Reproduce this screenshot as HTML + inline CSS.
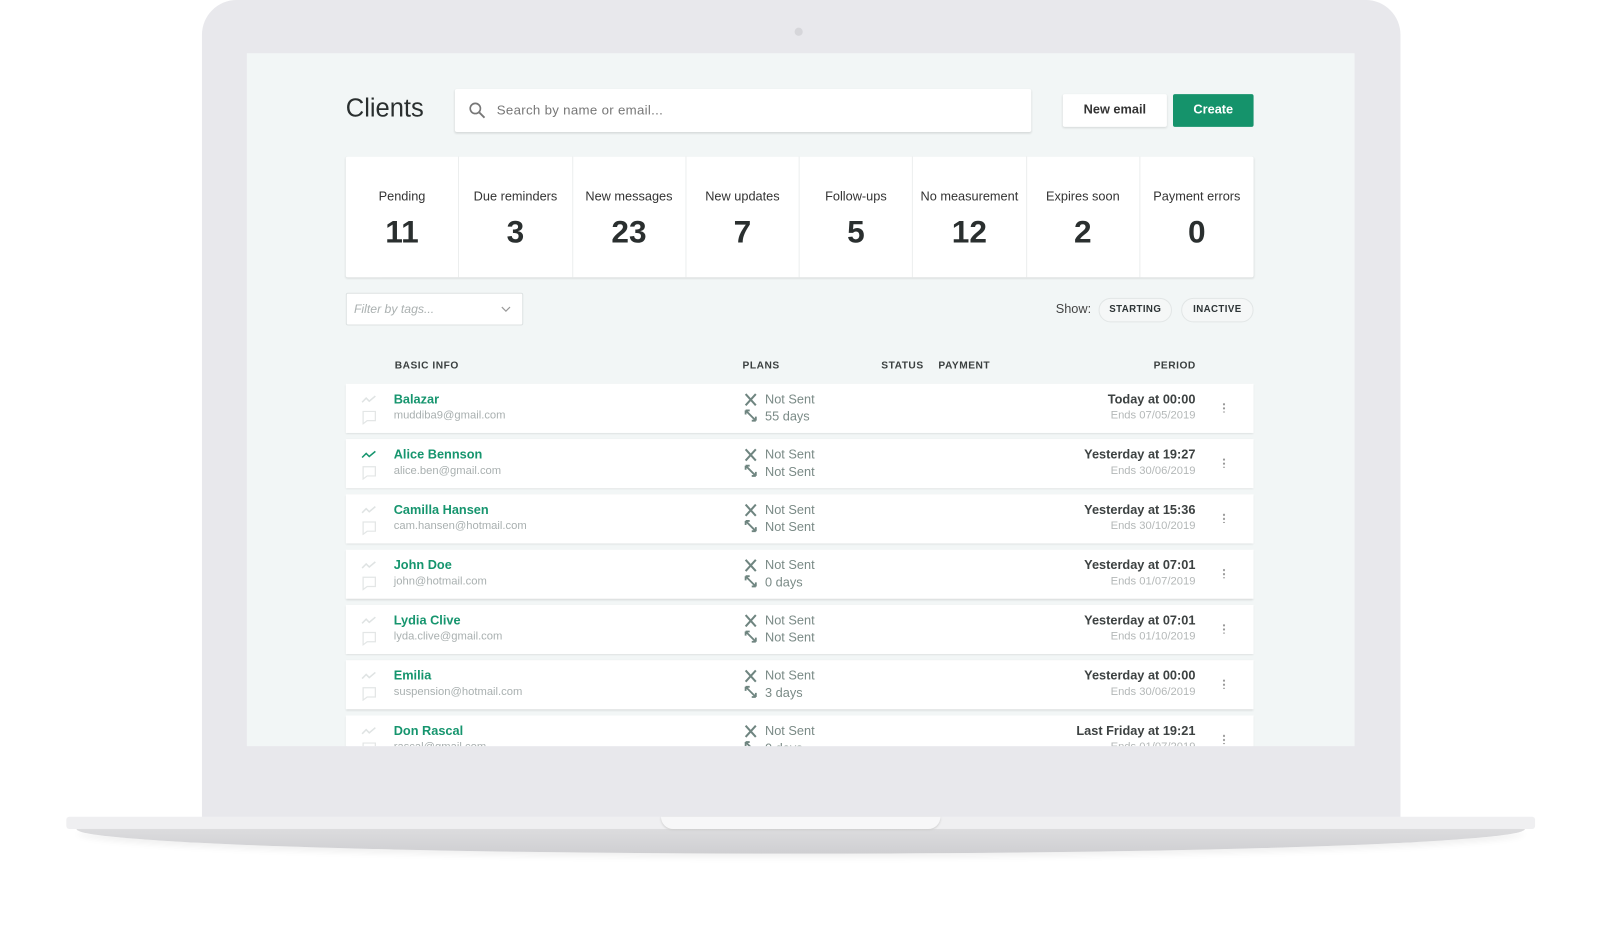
<!DOCTYPE html><html><head><style>
*{margin:0;padding:0;box-sizing:border-box}
body{width:1600px;height:926px;background:#fff;font-family:"Liberation Sans",sans-serif;position:relative;overflow:hidden;color:#2d3436}
#w{position:absolute;left:0;top:0;width:1564px;height:905px;transform:scale(1.02,1.0235);transform-origin:0 0}
.body{position:absolute;left:198px;top:0;width:1175px;height:805px;background:#e8e8ec;border-radius:34px 34px 0 0}
.cam{position:absolute;left:581px;top:27px;width:8px;height:8px;border-radius:50%;background:#d6d6da}
.screen{position:absolute;left:242px;top:52px;width:1086px;height:677px;background:#f2f6f6;overflow:hidden}
.base{position:absolute;left:65px;top:798px;width:1440px;height:12px;background:#efeff1;border-radius:3px}
.base2{position:absolute;left:75px;top:810px;width:1420px;height:24px;background:linear-gradient(#dcdcde,#cfcfd2);border-radius:0 0 700px 700px/0 0 24px 24px;box-shadow:0 4px 6px rgba(0,0,0,.06)}
.notch{position:absolute;left:648px;top:798px;width:274px;height:12px;background:#f7f7f8;border-radius:0 0 12px 12px;box-shadow:0 1px 2px #ccc}
.a{position:absolute}
.card{background:#fff;box-shadow:0 1px 2px rgba(0,0,0,.12)}
.stat{position:absolute;top:0;width:111.25px;height:118px;border-right:1px solid #eceeee;text-align:center}
.stat .l{font-size:12.5px;margin-top:32px;color:#333}
.stat .n{font-size:31px;font-weight:bold;margin-top:10px;color:#2a2f2f}
.hd{font-size:10px;font-weight:bold;letter-spacing:.5px;color:#3a3f3f;top:300px}
.row{position:absolute;left:97px;width:890px;height:48px}
.nm{position:absolute;left:47px;top:8px;font-size:12.5px;font-weight:bold;color:#16956e}
.em{position:absolute;left:47px;top:25px;font-size:11px;color:#a9b0b0}
.p1,.p2{position:absolute;left:411px;font-size:12.5px;color:#7a8a86}
.p1{top:8px}.p2{top:25px}
.t1{position:absolute;right:57px;top:8px;font-size:12.5px;font-weight:bold;color:#3d4242}
.t2{position:absolute;right:57px;top:25px;font-size:11px;color:#b4b8b8}
.dots{position:absolute;right:28px;top:18px;width:2px;height:10px;background:radial-gradient(circle,#999 1px,transparent 1.2px) 0 0/2px 4px}
.pill{position:absolute;top:239px;height:24px;border:1px solid #e2e6e6;border-radius:12px;font-size:9.5px;font-weight:bold;letter-spacing:.4px;line-height:22px;text-align:center;background:#f5f7f7}
</style></head><body><div id="w">
<div class="body"><div class="cam"></div></div>
<div class="screen">
 <div class="a" style="left:97px;top:40px;font-size:25px;color:#2a2f2f">Clients</div>
 <div class="a card" style="left:204px;top:35px;width:565px;height:42px;border-radius:2px">
  <svg class="a" style="left:13px;top:12px" width="18" height="18" viewBox="0 0 18 18"><circle cx="7" cy="7" r="5" fill="none" stroke="#777" stroke-width="1.6"/><path d="M11 11l5 5" stroke="#777" stroke-width="1.8"/></svg>
  <div class="a" style="left:41px;top:13px;font-size:13px;color:#777;letter-spacing:.3px">Search by name or email...</div></div>
 <div class="a card" style="left:800px;top:40px;width:102px;height:32px;border-radius:2px;font-size:12.5px;font-weight:bold;text-align:center;line-height:31px;color:#333">New email</div>
 <div class="a" style="left:908px;top:40px;width:79px;height:32px;border-radius:2px;background:#15936b;color:#fff;font-size:12.5px;font-weight:bold;text-align:center;line-height:31px">Create</div>
 <div class="a card" style="left:97px;top:101px;width:890px;height:118px;border-radius:2px">
  <div class="stat" style="left:0"><div class="l">Pending</div><div class="n">11</div></div>
  <div class="stat" style="left:111.25px"><div class="l">Due reminders</div><div class="n">3</div></div>
  <div class="stat" style="left:222.5px"><div class="l">New messages</div><div class="n">23</div></div>
  <div class="stat" style="left:333.75px"><div class="l">New updates</div><div class="n">7</div></div>
  <div class="stat" style="left:445px"><div class="l">Follow-ups</div><div class="n">5</div></div>
  <div class="stat" style="left:556.25px"><div class="l">No measurement</div><div class="n">12</div></div>
  <div class="stat" style="left:667.5px"><div class="l">Expires soon</div><div class="n">2</div></div>
  <div class="stat" style="left:778.75px;border:0"><div class="l">Payment errors</div><div class="n">0</div></div>
 </div>
 <div class="a card" style="left:97px;top:234px;width:174px;height:32px;border:1px solid #dde2e2;box-shadow:none;border-radius:2px">
  <div class="a" style="left:7px;top:8px;font-size:12px;font-style:italic;color:#aab0b0">Filter by tags...</div>
  <svg class="a" style="left:151px;top:11px" width="10" height="8"><path d="M1 2l4 4 4-4" fill="none" stroke="#999" stroke-width="1.2"/></svg></div>
 <div class="a" style="left:793px;top:243px;font-size:12.5px;color:#444">Show:</div>
 <div class="pill" style="left:835px;width:72px">STARTING</div>
 <div class="pill" style="left:916px;width:71px">INACTIVE</div>
 <div class="a hd" style="left:145px">BASIC INFO</div>
 <div class="a hd" style="left:486px">PLANS</div>
 <div class="a hd" style="left:622px">STATUS</div>
 <div class="a hd" style="left:678px">PAYMENT</div>
 <div class="a hd" style="left:889px">PERIOD</div>
 <div id="rows"></div>
</div>
<div class="base"></div><div class="base2"></div><div class="notch"></div>
</div>
<script>
var d=[["Balazar","muddiba9@gmail.com","55 days","Today at 00:00","Ends 07/05/2019",0],
["Alice Bennson","alice.ben@gmail.com","Not Sent","Yesterday at 19:27","Ends 30/06/2019",1],
["Camilla Hansen","cam.hansen@hotmail.com","Not Sent","Yesterday at 15:36","Ends 30/10/2019",0],
["John Doe","john@hotmail.com","0 days","Yesterday at 07:01","Ends 01/07/2019",0],
["Lydia Clive","lyda.clive@gmail.com","Not Sent","Yesterday at 07:01","Ends 01/10/2019",0],
["Emilia","suspension@hotmail.com","3 days","Yesterday at 00:00","Ends 30/06/2019",0],
["Don Rascal","rascal@gmail.com","0 days","Last Friday at 19:21","Ends 01/07/2019",0]];
var h="";d.forEach(function(r,i){var c=r[5]?"#16956e":"#dfe3e3";
h+='<div class="row card" style="top:'+(323+i*54)+'px"><svg class="a" style="left:15px;top:10px" width="16" height="30"><path d="M1 8l4-4 3 3 6-5" fill="none" stroke="'+c+'" stroke-width="1.5"/><path d="M2 17h12v9H6l-4 3z" fill="none" stroke="#e3e6e6" stroke-width="1.2"/></svg><div class="nm">'+r[0]+'</div><div class="em">'+r[1]+'</div>'+
'<svg class="a" style="left:390px;top:9px" width="14" height="30"><path d="M2 1l10 11M12 1L2 12" stroke="#6f8580" stroke-width="2"/><path d="M2 17l10 10M2 17h4M2 17v4M12 27h-4M12 27v-4" stroke="#6f8580" stroke-width="1.8" fill="none"/></svg><div class="p1">Not Sent</div><div class="p2">'+r[2]+'</div><div class="t1">'+r[3]+'</div><div class="t2">'+r[4]+'</div><div class="dots"></div></div>'});
document.getElementById("rows").outerHTML=h;
</script>
</body></html>
